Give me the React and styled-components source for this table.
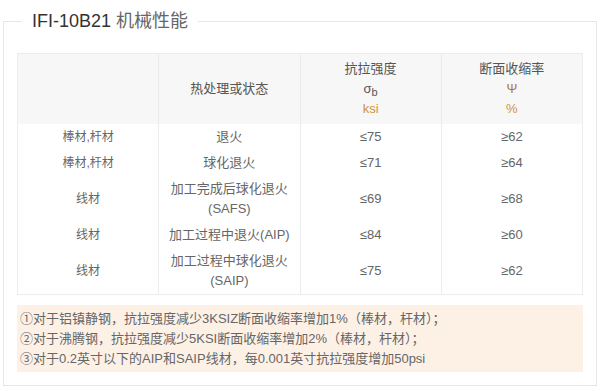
import React from 'react'
import styled, { createGlobalStyle } from 'styled-components'

const GlobalStyle = createGlobalStyle`
  html, body {
    margin: 0;
    padding: 0;
    background: #fff;
  }
  body {
    font-family: "Liberation Sans", "Noto Sans CJK SC", sans-serif;
    color: #666;
  }
`

const rows = [
  { form: '棒材,杆材', state: ['退火'], strength: '≤75', shrink: '≥62' },
  { form: '棒材,杆材', state: ['球化退火'], strength: '≤71', shrink: '≥64' },
  { form: '线材', state: ['加工完成后球化退火', '(SAFS)'], strength: '≤69', shrink: '≥68' },
  { form: '线材', state: ['加工过程中退火(AIP)'], strength: '≤84', shrink: '≥60' },
  { form: '线材', state: ['加工过程中球化退火', '(SAIP)'], strength: '≤75', shrink: '≥62' },
]

const notes = [
  '①对于铝镇静钢，抗拉强度减少3KSIZ断面收缩率增加1%（棒材，杆材）；',
  '②对于沸腾钢，抗拉强度减少5KSI断面收缩率增加2%（棒材，杆材）；',
  '③对于0.2英寸以下的AIP和SAIP线材，每0.001英寸抗拉强度增加50psi',
]

export default function App() {
  return (
    <>
      <GlobalStyle />
      <Panel>
        <Title>
          IFI-10B21 <TitleSub>机械性能</TitleSub>
        </Title>
        <Table>
          <thead>
            <tr>
              <Th></Th>
              <Th>热处理或状态</Th>
              <Th>
                抗拉强度<br />
                σ<sub>b</sub><br />
                <Unit>ksi</Unit>
              </Th>
              <Th>
                断面收缩率<br />
                <Unit $dark>Ψ</Unit><br />
                <Unit>%</Unit>
              </Th>
            </tr>
          </thead>
          <tbody>
            {rows.map((r, i) => (
              <tr key={i}>
                <Td $small>{r.form}</Td>
                <Td>
                  {r.state.map((s, j) => (
                    <div key={j}>{s}</div>
                  ))}
                </Td>
                <Td>{r.strength}</Td>
                <Td>{r.shrink}</Td>
              </tr>
            ))}
          </tbody>
        </Table>
        <Notes>
          {notes.map((n, i) => (
            <NoteLine key={i}>{n}</NoteLine>
          ))}
        </Notes>
      </Panel>
    </>
  )
}

const Panel = styled.fieldset`
  margin: 9px 3px 0;
  padding: 20px 13px 13px;
  border: 1px solid #e6e6e6;
  min-width: 0;
`

const Title = styled.legend`
  margin-left: 5px;
  padding: 0 10px;
  font-size: 18px;
  line-height: 24px;
  color: #333;
`

const TitleSub = styled.span`
  color: #666;
`

const Table = styled.table`
  width: 100%;
  table-layout: fixed;
  border-collapse: collapse;
  border: 1px solid #ececec;
  font-size: 13px;
  text-align: center;
`

const Th = styled.th`
  font-weight: normal;
  background: #f7f7f7;
  color: #555;
  padding: 5px 4px;
  line-height: 20px;
  border-left: 1px solid #ececec;
  vertical-align: middle;
  sub {
    font-size: 11px;
    vertical-align: -3px;
    line-height: 0;
  }
`

const Unit = styled.span`
  color: ${p => (p.$dark ? '#a87636' : '#d09438')};
`

const Td = styled.td`
  padding: 3px 4px;
  line-height: 20px;
  font-size: ${p => (p.$small ? '12px' : '13px')};
  border-left: 1px solid #ececec;
  color: #666;
  vertical-align: middle;
`

const Notes = styled.div`
  margin-top: 10px;
  background: #fdf1e6;
  padding: 4px 3px 3px;
`

const NoteLine = styled.div`
  font-size: 13px;
  line-height: 20px;
  color: #666;
`
